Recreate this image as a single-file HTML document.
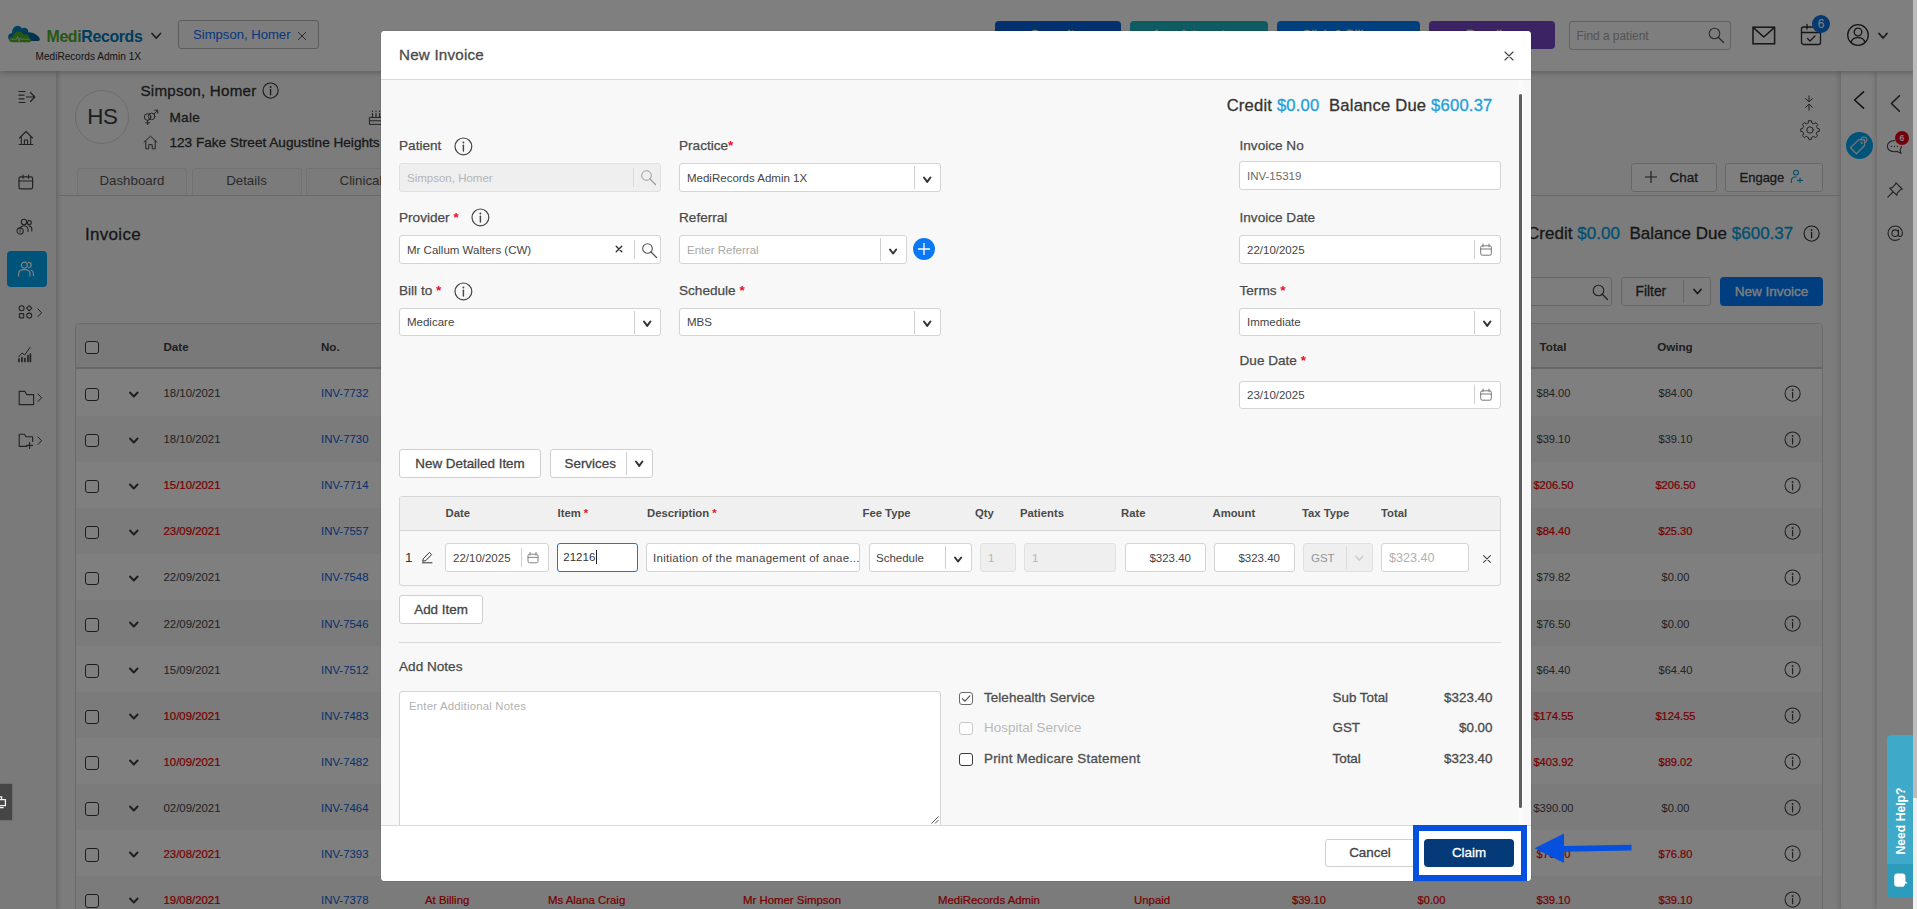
<!DOCTYPE html>
<html lang="en"><head><meta charset="utf-8"><title>New Invoice - MediRecords</title>
<style>
*{box-sizing:border-box;margin:0;padding:0}
html,body{width:1917px;height:909px;overflow:hidden;background:#f8f8f8}
body{font-family:"Liberation Sans",sans-serif;color:#333;position:relative;font-size:12px}
.a{position:absolute}
.t{position:absolute;white-space:nowrap;line-height:20px;height:20px}
.sb{-webkit-text-stroke:0.3px currentColor}
.b{font-weight:bold}
svg{position:absolute;overflow:visible}
.ic{fill:none;stroke:#333;stroke-width:1.3;stroke-linecap:round;stroke-linejoin:round}
#page{position:absolute;left:0;top:0;width:1917px;height:909px;background:#f7f7f7;overflow:hidden}
#hdr{left:0;top:0;width:1917px;height:71px;background:#fff;box-shadow:0 2px 5px rgba(0,0,0,.22)}
#side{left:0;top:71px;width:56px;height:838px;background:#f4f4f4;box-shadow:2px 0 5px rgba(0,0,0,.18)}
#content{left:58px;top:71px;width:1783px;height:838px;background:#f9f9f9}
.tab{position:absolute;top:168px;height:27px;border:1px solid #e4e4e4;border-bottom:none;border-radius:3px 3px 0 0;background:#f6f6f6;text-align:center;font-size:13.3px;line-height:24px;color:#555}
.btn{position:absolute;border:1px solid #cfcfcf;border-radius:3px;background:#fff;text-align:center;color:#444}
.inp{position:absolute;border:1px solid #d4d4d4;border-radius:3px;background:#fff;height:28px;font-size:11.5px;line-height:26px;color:#444;padding-left:7px;white-space:nowrap;overflow:hidden}
.inp.dis{background:#efefef;color:#b4b4b4;border-color:#e0e0e0}
.dv{position:absolute;width:1px;background:#d0d0d0}
.lbl{position:absolute;white-space:nowrap;font-size:13.6px;line-height:20px;color:#4a4a4a;-webkit-text-stroke:0.25px currentColor}
.req{color:#e8112d;font-weight:bold;-webkit-text-stroke:0}
.cb{position:absolute;width:14px;height:14px;border:1.3px solid #3a3a3a;border-radius:3px;background:#fff}
.row{position:absolute;left:76px;width:1746px;height:46px}
.row .t{font-size:11.4px}
.red{color:#ff0000}
.rr .t{-webkit-text-stroke:0.22px #f00000}
.rr .lnk{-webkit-text-stroke:0}
.mny{font-size:11.1px !important}
.lnk{color:#0d5fd8}
#overlay{position:absolute;left:0;top:0;width:1917px;height:909px;background:rgba(0,0,0,.5)}
#modal{position:absolute;left:381px;top:31px;width:1150px;height:849.5px;background:#f8f8f8;border-radius:4px;box-shadow:0 0 0 1px rgba(0,0,0,.06)}
#mh{position:absolute;left:0;top:0;width:1150px;height:49px;background:#fff;border-bottom:1px solid #d9d9d9;border-radius:4px 4px 0 0}
#mf{position:absolute;left:0;top:794px;width:1150px;height:55.5px;background:#fff;border-top:1px solid #d9d9d9;border-radius:0 0 4px 4px}
.th{position:absolute;top:0;font-size:11.5px;font-weight:bold;color:#4a4a4a;line-height:33px;white-space:nowrap}
</style></head>
<body>
<div id="page">
<div class="a" id="content"></div>
<div class="a" id="side"></div>
<div class="a" style="left:1841px;top:71px;width:36px;height:838px;background:#fff;box-shadow:-2px 0 5px rgba(0,0,0,.16)"></div>
<div class="a" style="left:1877px;top:71px;width:36px;height:838px;background:#fdfdfd;box-shadow:-2px 0 5px rgba(0,0,0,.16)"></div>
<div class="a" id="hdr"></div>
<svg style="left:7px;top:24px" width="35" height="20" viewBox="7 24 35 20">
<defs><linearGradient id="lg1" x1="0" y1="0" x2="1" y2="1"><stop offset="0" stop-color="#0090c8"/><stop offset="1" stop-color="#005a96"/></linearGradient></defs>
<path d="M11 40.8C8.6 40.4 7.8 38 8.3 36C8.8 34 10.4 33 12 33.2C12 29 14.4 25.8 17.6 25.7C19.6 25.7 21 26.8 21.8 28.4C23.2 27.4 25.4 27.4 26.8 28.6C28 29.6 28.4 31 28.2 32.4C30.4 32 33 32.8 35.4 34.2C38.2 35.8 40 38 39.8 39.6C39.7 40.6 39 41 38 41Z" fill="url(#lg1)"/>
<path d="M12.4 42.2C10.2 42.2 9 40.8 9.2 39.2C9.4 37.4 11 36.2 12.8 36.6C13.4 33.6 15.8 31.4 18.8 31.5C21.2 31.6 23 33 23.8 34.8C25.2 34 27.2 34.2 28.4 35.4C29.2 36.2 29.5 37.2 29.4 38.2C30.8 38.6 31.4 39.8 31.2 40.8C31 41.8 30.2 42.2 29.4 42.2Z" fill="#4fae2a"/>
<path d="M10.5 39.2H16.4L17.6 36.6L19 41.4L20.2 37.8L20.9 39.2H29.6" fill="none" stroke="#e8f4e0" stroke-width="0.7" stroke-linejoin="round"/>
</svg>
<span class="t b" style="left:46.5px;top:24.5px;font-size:15.9px;line-height:24px;height:24px;letter-spacing:-0.35px"><span style="color:#4fae2a">Medi</span><span style="color:#0079b8">Records</span></span>
<svg style="left:148.75px;top:31.2px" width="14.5" height="9.6" viewBox="-7.25 -4.8 14.5 9.6"><path d="M-4.25 -2.3L0 2.3L4.25 -2.3" fill="none" stroke="#444" stroke-width="1.7" stroke-linecap="round" stroke-linejoin="round"/></svg><span class="t " style="top:46.5px;font-size:10.1px;left:35.5px;color:#2a2a2a;">MediRecords Admin 1X</span><div class="a" style="left:178px;top:20px;width:141px;height:29px;border:1px solid #b9b9b9;border-radius:3px;background:#fafafa"></div>
<span class="t " style="top:25px;font-size:13.1px;left:193px;color:#0d6efd;">Simpson, Homer</span><svg style="left:296px;top:30px" width="12" height="12" viewBox="-6 -6 12 12"><path d="M-3.6 -3.6L3.6 3.6M3.6 -3.6L-3.6 3.6" stroke="#555" stroke-width="1" stroke-linecap="round"/></svg><div class="a" style="left:995px;top:21px;width:126px;height:28px;border-radius:4px;background:#0660dc"></div>
<div class="a" style="left:1130px;top:21px;width:138px;height:28px;border-radius:4px;background:#1cb8c2"></div>
<div class="a" style="left:1277px;top:21px;width:143px;height:28px;border-radius:4px;background:#0080ff"></div>
<div class="a" style="left:1429px;top:21px;width:126px;height:28px;border-radius:4px;background:#7846c8"></div>
<span class="t sb" style="top:25px;font-size:13px;left:1030px;color:#fff;">Consult</span><span class="t sb" style="top:25px;font-size:13px;left:1152px;color:#fff;">Appointment</span><span class="t sb" style="top:25px;font-size:13px;left:1302px;color:#fff;">Click &amp; Bill</span><span class="t sb" style="top:25px;font-size:13px;left:1466px;color:#fff;">Recall</span><div class="a" style="left:1569px;top:21px;width:162px;height:29px;border:1px solid #c4c4c4;border-radius:3px;background:#fcfcfc"></div>
<span class="t " style="top:26.3px;font-size:11.9px;left:1576.5px;color:#a9a9a9;">Find a patient</span><svg style="left:1706px;top:24.5px" width="20" height="20" viewBox="-10 -10 20 20"><circle cx="-1.5" cy="-1.5" r="5.3" fill="none" stroke="#555" stroke-width="1.1"/><path d="M2.32 2.32L7.5 7.5" stroke="#555" stroke-width="1.3" stroke-linecap="round"/></svg><svg style="left:1752px;top:26px" width="24" height="20" viewBox="0 0 24 20"><rect x="1" y="1.2" width="21.6" height="16.6" fill="none" stroke="#2b2b2b" stroke-width="1.5"/><path d="M1.4 1.6L11.8 11L22.2 1.6" fill="none" stroke="#2b2b2b" stroke-width="1.5" stroke-linejoin="round"/></svg>
<svg style="left:1800px;top:23px" width="23" height="23" viewBox="0 0 23 23" class="ic"><rect x="1.5" y="4" width="19" height="17.5" rx="2" stroke="#2b2b2b" stroke-width="1.3"/><path d="M1.5 9.5H20.5M7 1.5V6M15 1.5V6M7.5 15.5L10 18L15 13" stroke="#2b2b2b" stroke-width="1.3"/></svg>
<div class="a" style="left:1812px;top:15px;width:18px;height:18px;border-radius:9px;background:#0a73e0"></div>
<span class="t " style="top:14px;font-size:12px;left:1671px;width:300px;text-align:center;color:#fff;">6</span><svg style="left:1846px;top:23px" width="24" height="24" viewBox="-12 -12 24 24" class="ic"><circle r="10.3" stroke="#2b2b2b" stroke-width="1.3"/><circle cy="-3" r="3.8" stroke="#2b2b2b" stroke-width="1.3"/><path d="M-7 7.4C-6 3.6 -3 2.6 0 2.6S6 3.6 7 7.4" stroke="#2b2b2b" stroke-width="1.3"/></svg>
<svg style="left:1876.0px;top:31.25px" width="14" height="9.5" viewBox="-7.0 -4.75 14 9.5"><path d="M-4.0 -2.25L0 2.25L4.0 -2.25" fill="none" stroke="#333" stroke-width="1.8" stroke-linecap="round" stroke-linejoin="round"/></svg><svg style="left:18px;top:90px" width="18" height="14" viewBox="0 0 18 14" class="ic"><path d="M1 1.5H7M1 5.2H6M1 8.8H6M1 12.5H7M8.5 7H16.5M12.5 2.5L16.8 7L12.5 11.5" stroke="#444" stroke-width="1.2"/></svg>
<svg style="left:18px;top:130px" width="16" height="16" viewBox="0 0 16 16" class="ic"><path d="M1.5 8L8 1.5L14.5 8M3.3 6.6V14.5M12.7 6.6V14.5M1.2 14.5H14.8M6.4 14.5V10H9.6V14.5" stroke="#444" stroke-width="1.1"/></svg>
<svg style="left:18px;top:174px" width="16" height="16" viewBox="0 0 16 16" class="ic"><rect x="1" y="2.8" width="13.6" height="12" rx="1.6" stroke="#444" stroke-width="1.2"/><path d="M1 7H14.6M5 1V4.2M10.6 1V4.2" stroke="#444" stroke-width="1.2"/></svg>
<svg style="left:16px;top:218px" width="18" height="17" viewBox="0 0 18 17" class="ic"><circle cx="8" cy="4" r="2.7" stroke="#444" stroke-width="1.1"/><circle cx="13.3" cy="4.6" r="2" stroke="#444" stroke-width="1.1"/><path d="M4 10.5C4.6 8.6 6.2 7.8 8 7.8C10.2 7.8 11.7 9 12 11.2V13.5M13 8C14.8 8.1 15.8 9.2 15.8 11V13" stroke="#444" stroke-width="1.1"/><circle cx="4.2" cy="13" r="3.1" stroke="#444" stroke-width="1.1"/><path d="M4.2 11.8V14.2" stroke="#444" stroke-width="0.9"/></svg>
<div class="a" style="left:7px;top:251px;width:40px;height:36px;border-radius:4px;background:#00a8f4"></div>
<svg style="left:17px;top:261px" width="18" height="17" viewBox="0 0 18 17" class="ic"><circle cx="7.4" cy="4.2" r="3" stroke="#fff" stroke-width="1.2"/><path d="M1.6 15V12.6C1.6 9.8 4 8.6 7.4 8.6S13 9.8 13 12.6V15M11.4 1.4C13.2 1.4 14.2 2.6 14.2 4S13.3 6.4 11.8 6.6M14.4 9.2C15.8 9.8 16.4 10.8 16.4 12.4V14.6" stroke="#fff" stroke-width="1.2"/></svg>
<svg style="left:18px;top:305px" width="16" height="14" viewBox="0 0 16 14" class="ic"><circle cx="3.6" cy="3.2" r="2.5" stroke="#444" stroke-width="1.1"/><path d="M11.2 0.6L13.8 3.2L11.2 5.8L8.6 3.2Z" stroke="#444" stroke-width="1.1"/><rect x="1.4" y="8.6" width="4.3" height="4.3" rx="0.6" stroke="#444" stroke-width="1.1"/><circle cx="11.2" cy="10.6" r="2.5" stroke="#444" stroke-width="1.1"/></svg>
<svg style="left:36.2px;top:306.75px" width="7.6" height="11.5" viewBox="-3.8 -5.75 7.6 11.5"><path d="M-1.8 -3.75L1.8 0L-1.8 3.75" fill="none" stroke="#444" stroke-width="1" stroke-linecap="round" stroke-linejoin="round"/></svg><svg style="left:17px;top:346px" width="15" height="17" viewBox="0 0 15 17" class="ic"><path d="M1.6 11L5 7L7.6 9L13.2 1.2" stroke="#444" stroke-width="1"/><path d="M2 13V15.4M5 11.6V15.4M8 12.6V15.4M11 9.6V15.4M13.4 8V15.4" stroke="#444" stroke-width="1.7"/></svg>
<svg style="left:18px;top:390px" width="17" height="16" viewBox="0 0 17 16" class="ic"><path d="M1.2 14.6V1.4H7L8.6 4.6H15.6V14.6Z" stroke="#444" stroke-width="1.1"/></svg>
<svg style="left:36.2px;top:392.25px" width="7.6" height="11.5" viewBox="-3.8 -5.75 7.6 11.5"><path d="M-1.8 -3.75L1.8 0L-1.8 3.75" fill="none" stroke="#444" stroke-width="1" stroke-linecap="round" stroke-linejoin="round"/></svg><svg style="left:18px;top:433px" width="17" height="16" viewBox="0 0 17 16" class="ic"><path d="M9 13.4H1.2V1.2H6.4L8 3.8H14.6V8.4M11.6 9.4V15.4M8.6 12.4H14.6" stroke="#444" stroke-width="1.1"/></svg>
<svg style="left:36.2px;top:435.25px" width="7.6" height="11.5" viewBox="-3.8 -5.75 7.6 11.5"><path d="M-1.8 -3.75L1.8 0L-1.8 3.75" fill="none" stroke="#444" stroke-width="1" stroke-linecap="round" stroke-linejoin="round"/></svg><div class="a" style="left:75px;top:90px;width:54px;height:54px;border-radius:27px;border:1px solid #d8d8d8;background:#fafafa"></div>
<span class="t " style="top:107px;font-size:22.4px;left:-47.5px;width:300px;text-align:center;color:#3a3a3a;letter-spacing:-0.3px;">HS</span><span class="t sb" style="top:81px;font-size:15.2px;left:140.5px;color:#333;letter-spacing:0.2px;">Simpson, Homer</span><svg style="left:262.2px;top:82.4px" width="17.2" height="17.2" viewBox="-8.6 -8.6 17.2 17.2"><circle r="7.6" fill="none" stroke="#333" stroke-width="1.1"/><circle cy="-3.57" r="0.95" fill="#333"/><path d="M0 -1.14V4.18" stroke="#333" stroke-width="1.3" stroke-linecap="round"/></svg><svg style="left:143px;top:109px" width="16" height="17" viewBox="0 0 16 17" class="ic"><circle cx="4.6" cy="8" r="3.3" stroke="#444" stroke-width="1"/><circle cx="8.6" cy="7.4" r="3.3" stroke="#444" stroke-width="1"/><path d="M4.6 11.4V15.6M2.6 13.8H6.6M11 5L14.6 1.4M11.6 1.2H14.8V4.4" stroke="#444" stroke-width="1"/></svg>
<span class="t sb" style="top:107.7px;font-size:13.6px;left:169.5px;color:#333;letter-spacing:0.25px;">Male</span><svg style="left:368px;top:110px" width="16" height="15" viewBox="0 0 16 15" class="ic"><path d="M1.4 14V7.4H14.6V14ZM1.4 10.8H14.6M4.4 7.4V3.4M8 7.4V3.4M11.6 7.4V3.4M4.4 1V1.6M8 1V1.6M11.6 1V1.6" stroke="#444" stroke-width="1"/></svg>
<svg style="left:143px;top:135px" width="15" height="15" viewBox="0 0 15 15" class="ic"><path d="M1 7.2L7.5 1.2L14 7.2M2.8 6V13.8H5.8V9.6H9.2V13.8H12.2V6" stroke="#444" stroke-width="1"/></svg>
<span class="t sb" style="top:132.5px;font-size:13.6px;left:169.5px;color:#333;letter-spacing:0px;">123 Fake Street Augustine Heights</span><svg style="left:1802px;top:95px" width="14" height="16" viewBox="0 0 14 16" class="ic"><path d="M7 0.8V6.4M3.6 3.6L7 6.8L10.4 3.6M7 15.2V9.6M3.6 12.4L7 9.2L10.4 12.4" stroke="#444" stroke-width="1"/></svg>
<svg style="left:1799.6px;top:120.4px" width="20" height="20" viewBox="-10 -10 20 20" class="ic"><path d="M-1.3 -9.3H1.3L1.9 -7C2.6 -6.8 3.2 -6.5 3.8 -6.2L5.9 -7.3L7.7 -5.5L6.5 -3.5C6.8 -2.9 7.1 -2.3 7.2 -1.7L9.3 -1.1V1.3L7.1 1.9C6.9 2.6 6.6 3.2 6.3 3.8L7.5 5.8L5.7 7.6L3.7 6.4C3.1 6.8 2.5 7 1.8 7.2L1.3 9.3H-1.3L-1.8 7.2C-2.5 7 -3.1 6.8 -3.7 6.4L-5.7 7.6L-7.5 5.8L-6.3 3.8C-6.7 3.2 -6.9 2.6 -7.1 1.9L-9.3 1.3V-1.1L-7.2 -1.7C-7 -2.4 -6.8 -3 -6.4 -3.6L-7.6 -5.6L-5.8 -7.4L-3.8 -6.2C-3.2 -6.6 -2.6 -6.8 -1.9 -7Z" stroke="#444" stroke-width="1"/><circle r="3.2" stroke="#444" stroke-width="1"/></svg>
<div class="tab" style="left:77px;width:110px">Dashboard</div>
<div class="tab" style="left:191.5px;width:110px">Details</div>
<div class="tab" style="left:306px;width:110px">Clinical</div>
<div class="tab" style="left:420.5px;width:110px">Correspondence</div>
<div class="tab" style="left:535px;width:110px">Documents</div>
<div class="tab" style="left:649.5px;width:110px">Accounts</div>
<div class="a" style="left:58px;top:195px;width:1783px;height:1px;background:#d2d2d2"></div>
<div class="btn" style="left:1631px;top:163px;width:86px;height:29px"></div>
<svg style="left:1644px;top:170px" width="14" height="14" viewBox="0 0 14 14"><path d="M7 1V13M1 7H13" stroke="#333" stroke-width="1.1"/></svg>
<span class="t sb" style="top:167.8px;font-size:13.5px;left:1669.5px;color:#333;">Chat</span><div class="btn" style="left:1724.5px;top:163px;width:98.5px;height:29px"></div>
<span class="t sb" style="top:167.8px;font-size:13.0px;left:1739.5px;color:#333;">Engage</span><svg style="left:1790px;top:169px" width="14" height="15" viewBox="0 0 14 15" class="ic"><circle cx="6" cy="3.6" r="2.4" stroke="#00a0d8" stroke-width="1.1"/><path d="M1.4 13.6V12C1.4 9.4 3 8 5.4 8H6.4M10 9V13.6M7.6 11.4H12.4" stroke="#00a0d8" stroke-width="1.1"/></svg>
<span class="t sb" style="top:224.5px;font-size:17px;left:85px;color:#2f2f2f;letter-spacing:0.3px;">Invoice</span><span class="t sb" style="left:1501.3px;top:224.1px;font-size:17px;color:#2f2f2f;letter-spacing:0.02px;width:292px;text-align:right">Credit <span style="color:#00a0e3">$0.00</span>&nbsp; Balance Due <span style="color:#00a0e3">$600.37</span></span>
<svg style="left:1803.1px;top:225.4px" width="17.2" height="17.2" viewBox="-8.6 -8.6 17.2 17.2"><circle r="7.6" fill="none" stroke="#333" stroke-width="1.1"/><circle cy="-3.57" r="0.95" fill="#333"/><path d="M0 -1.14V4.18" stroke="#333" stroke-width="1.3" stroke-linecap="round"/></svg><div class="a" style="left:1400px;top:277px;width:212px;height:29px;border:1px solid #cdcdcd;border-radius:3px;background:#fbfbfb"></div>
<svg style="left:1590px;top:281.5px" width="20" height="20" viewBox="-10 -10 20 20"><circle cx="-1.5" cy="-1.5" r="5.3" fill="none" stroke="#444" stroke-width="1.1"/><path d="M2.32 2.32L7.5 7.5" stroke="#444" stroke-width="1.3" stroke-linecap="round"/></svg><div class="btn" style="left:1621px;top:277px;width:90px;height:29px;background:#fbfbfb"></div>
<span class="t sb" style="top:281.8px;font-size:13.8px;left:1635.5px;color:#333;">Filter</span><div class="dv" style="left:1683px;top:280px;height:23px"></div>
<svg style="left:1690.5px;top:287.0px" width="13" height="9" viewBox="-6.5 -4.5 13 9"><path d="M-3.5 -2.0L0 2.0L3.5 -2.0" fill="none" stroke="#333" stroke-width="1.8" stroke-linecap="round" stroke-linejoin="round"/></svg><div class="a" style="left:1720px;top:277px;width:103px;height:29px;border-radius:4px;background:#007dff"></div>
<span class="t sb" style="top:281.8px;font-size:13.5px;left:1621.5px;width:300px;text-align:center;color:#fff;">New Invoice</span><div class="a" style="left:75px;top:323px;width:1748px;height:600px;border:1px solid #d4d4d4;border-radius:4px;background:#fff"></div>
<div class="a" style="left:76px;top:324px;width:1746px;height:45px;background:#f3f3f3;border-bottom:2px solid #cfcfcf;border-radius:3px 3px 0 0"></div>
<div class="cb" style="left:85px;top:341px;height:13px"></div>
<span class="t b" style="top:337px;font-size:11.6px;left:163.5px;color:#3c3c3c;">Date</span><span class="t b" style="top:337px;font-size:11.6px;left:321px;color:#3c3c3c;">No.</span><span class="t b" style="top:337px;font-size:11.6px;left:425px;color:#3c3c3c;">Status</span><span class="t b" style="top:337px;font-size:11.6px;left:548px;color:#3c3c3c;">Provider</span><span class="t b" style="top:337px;font-size:11.6px;left:743px;color:#3c3c3c;">Patient</span><span class="t b" style="top:337px;font-size:11.6px;left:938px;color:#3c3c3c;">Practice</span><span class="t b" style="top:337px;font-size:11.6px;left:1134px;color:#3c3c3c;">Payment</span><span class="t b" style="top:337px;font-size:11.6px;left:1158.5px;width:300px;text-align:center;color:#3c3c3c;">Amount</span><span class="t b" style="top:337px;font-size:11.6px;left:1281px;width:300px;text-align:center;color:#3c3c3c;">Paid</span><span class="t b" style="top:337px;font-size:11.6px;left:1403px;width:300px;text-align:center;color:#3c3c3c;">Total</span><span class="t b" style="top:337px;font-size:11.6px;left:1525px;width:300px;text-align:center;color:#3c3c3c;">Owing</span><div class="row" style="top:370px;background:#fff"><div class="cb" style="left:9px;top:18px;height:13px"></div><span class="t" style="top:13.1px;left:87.5px;color:#444">18/10/2021</span><span class="t lnk" style="top:13.1px;left:245px">INV-7732</span><span class="t mny" style="top:13.1px;left:1427.5px;width:100px;text-align:center;color:#444">$84.00</span><span class="t mny" style="top:13.1px;left:1549.5px;width:100px;text-align:center;color:#444">$84.00</span></div>
<svg style="left:126.5px;top:389.9px" width="13.6" height="9" viewBox="-6.8 -4.5 13.6 9"><path d="M-3.8 -2.0L0 2.0L3.8 -2.0" fill="none" stroke="#3c3c3c" stroke-width="1.9" stroke-linecap="round" stroke-linejoin="round"/></svg><svg style="left:1784.4px;top:384.8px" width="17.2" height="17.2" viewBox="-8.6 -8.6 17.2 17.2"><circle r="7.6" fill="none" stroke="#444" stroke-width="1.05"/><circle cy="-3.57" r="0.95" fill="#444"/><path d="M0 -1.14V4.18" stroke="#444" stroke-width="1.25" stroke-linecap="round"/></svg><div class="row" style="top:416px;background:#f6f6f6"><div class="cb" style="left:9px;top:18px;height:13px"></div><span class="t" style="top:13.1px;left:87.5px;color:#444">18/10/2021</span><span class="t lnk" style="top:13.1px;left:245px">INV-7730</span><span class="t mny" style="top:13.1px;left:1427.5px;width:100px;text-align:center;color:#444">$39.10</span><span class="t mny" style="top:13.1px;left:1549.5px;width:100px;text-align:center;color:#444">$39.10</span></div>
<svg style="left:126.5px;top:435.9px" width="13.6" height="9" viewBox="-6.8 -4.5 13.6 9"><path d="M-3.8 -2.0L0 2.0L3.8 -2.0" fill="none" stroke="#3c3c3c" stroke-width="1.9" stroke-linecap="round" stroke-linejoin="round"/></svg><svg style="left:1784.4px;top:430.8px" width="17.2" height="17.2" viewBox="-8.6 -8.6 17.2 17.2"><circle r="7.6" fill="none" stroke="#444" stroke-width="1.05"/><circle cy="-3.57" r="0.95" fill="#444"/><path d="M0 -1.14V4.18" stroke="#444" stroke-width="1.25" stroke-linecap="round"/></svg><div class="row rr" style="top:462px;background:#fff"><div class="cb" style="left:9px;top:18px;height:13px"></div><span class="t" style="top:13.1px;left:87.5px;color:#f00000">15/10/2021</span><span class="t lnk" style="top:13.1px;left:245px">INV-7714</span><span class="t mny" style="top:13.1px;left:1427.5px;width:100px;text-align:center;color:#f00000">$206.50</span><span class="t mny" style="top:13.1px;left:1549.5px;width:100px;text-align:center;color:#f00000">$206.50</span></div>
<svg style="left:126.5px;top:481.9px" width="13.6" height="9" viewBox="-6.8 -4.5 13.6 9"><path d="M-3.8 -2.0L0 2.0L3.8 -2.0" fill="none" stroke="#3c3c3c" stroke-width="1.9" stroke-linecap="round" stroke-linejoin="round"/></svg><svg style="left:1784.4px;top:476.8px" width="17.2" height="17.2" viewBox="-8.6 -8.6 17.2 17.2"><circle r="7.6" fill="none" stroke="#444" stroke-width="1.05"/><circle cy="-3.57" r="0.95" fill="#444"/><path d="M0 -1.14V4.18" stroke="#444" stroke-width="1.25" stroke-linecap="round"/></svg><div class="row rr" style="top:508px;background:#f6f6f6"><div class="cb" style="left:9px;top:18px;height:13px"></div><span class="t" style="top:13.1px;left:87.5px;color:#f00000">23/09/2021</span><span class="t lnk" style="top:13.1px;left:245px">INV-7557</span><span class="t mny" style="top:13.1px;left:1427.5px;width:100px;text-align:center;color:#f00000">$84.40</span><span class="t mny" style="top:13.1px;left:1549.5px;width:100px;text-align:center;color:#f00000">$25.30</span></div>
<svg style="left:126.5px;top:527.9px" width="13.6" height="9" viewBox="-6.8 -4.5 13.6 9"><path d="M-3.8 -2.0L0 2.0L3.8 -2.0" fill="none" stroke="#3c3c3c" stroke-width="1.9" stroke-linecap="round" stroke-linejoin="round"/></svg><svg style="left:1784.4px;top:522.8px" width="17.2" height="17.2" viewBox="-8.6 -8.6 17.2 17.2"><circle r="7.6" fill="none" stroke="#444" stroke-width="1.05"/><circle cy="-3.57" r="0.95" fill="#444"/><path d="M0 -1.14V4.18" stroke="#444" stroke-width="1.25" stroke-linecap="round"/></svg><div class="row" style="top:554px;background:#fff"><div class="cb" style="left:9px;top:18px;height:13px"></div><span class="t" style="top:13.1px;left:87.5px;color:#444">22/09/2021</span><span class="t lnk" style="top:13.1px;left:245px">INV-7548</span><span class="t mny" style="top:13.1px;left:1427.5px;width:100px;text-align:center;color:#444">$79.82</span><span class="t mny" style="top:13.1px;left:1549.5px;width:100px;text-align:center;color:#444">$0.00</span></div>
<svg style="left:126.5px;top:573.9px" width="13.6" height="9" viewBox="-6.8 -4.5 13.6 9"><path d="M-3.8 -2.0L0 2.0L3.8 -2.0" fill="none" stroke="#3c3c3c" stroke-width="1.9" stroke-linecap="round" stroke-linejoin="round"/></svg><svg style="left:1784.4px;top:568.8px" width="17.2" height="17.2" viewBox="-8.6 -8.6 17.2 17.2"><circle r="7.6" fill="none" stroke="#444" stroke-width="1.05"/><circle cy="-3.57" r="0.95" fill="#444"/><path d="M0 -1.14V4.18" stroke="#444" stroke-width="1.25" stroke-linecap="round"/></svg><div class="row" style="top:600px;background:#f6f6f6"><div class="cb" style="left:9px;top:18px;height:14px"></div><span class="t" style="top:14px;left:87.5px;color:#444">22/09/2021</span><span class="t lnk" style="top:14px;left:245px">INV-7546</span><span class="t mny" style="top:14px;left:1427.5px;width:100px;text-align:center;color:#444">$76.50</span><span class="t mny" style="top:14px;left:1549.5px;width:100px;text-align:center;color:#444">$0.00</span></div>
<svg style="left:126.5px;top:619.9px" width="13.6" height="9" viewBox="-6.8 -4.5 13.6 9"><path d="M-3.8 -2.0L0 2.0L3.8 -2.0" fill="none" stroke="#3c3c3c" stroke-width="1.9" stroke-linecap="round" stroke-linejoin="round"/></svg><svg style="left:1784.4px;top:614.8px" width="17.2" height="17.2" viewBox="-8.6 -8.6 17.2 17.2"><circle r="7.6" fill="none" stroke="#444" stroke-width="1.05"/><circle cy="-3.57" r="0.95" fill="#444"/><path d="M0 -1.14V4.18" stroke="#444" stroke-width="1.25" stroke-linecap="round"/></svg><div class="row" style="top:646px;background:#fff"><div class="cb" style="left:9px;top:18px;height:14px"></div><span class="t" style="top:14px;left:87.5px;color:#444">15/09/2021</span><span class="t lnk" style="top:14px;left:245px">INV-7512</span><span class="t mny" style="top:14px;left:1427.5px;width:100px;text-align:center;color:#444">$64.40</span><span class="t mny" style="top:14px;left:1549.5px;width:100px;text-align:center;color:#444">$64.40</span></div>
<svg style="left:126.5px;top:665.9px" width="13.6" height="9" viewBox="-6.8 -4.5 13.6 9"><path d="M-3.8 -2.0L0 2.0L3.8 -2.0" fill="none" stroke="#3c3c3c" stroke-width="1.9" stroke-linecap="round" stroke-linejoin="round"/></svg><svg style="left:1784.4px;top:660.8px" width="17.2" height="17.2" viewBox="-8.6 -8.6 17.2 17.2"><circle r="7.6" fill="none" stroke="#444" stroke-width="1.05"/><circle cy="-3.57" r="0.95" fill="#444"/><path d="M0 -1.14V4.18" stroke="#444" stroke-width="1.25" stroke-linecap="round"/></svg><div class="row rr" style="top:692px;background:#f6f6f6"><div class="cb" style="left:9px;top:18px;height:14px"></div><span class="t" style="top:14px;left:87.5px;color:#f00000">10/09/2021</span><span class="t lnk" style="top:14px;left:245px">INV-7483</span><span class="t mny" style="top:14px;left:1427.5px;width:100px;text-align:center;color:#f00000">$174.55</span><span class="t mny" style="top:14px;left:1549.5px;width:100px;text-align:center;color:#f00000">$124.55</span></div>
<svg style="left:126.5px;top:711.9px" width="13.6" height="9" viewBox="-6.8 -4.5 13.6 9"><path d="M-3.8 -2.0L0 2.0L3.8 -2.0" fill="none" stroke="#3c3c3c" stroke-width="1.9" stroke-linecap="round" stroke-linejoin="round"/></svg><svg style="left:1784.4px;top:706.8px" width="17.2" height="17.2" viewBox="-8.6 -8.6 17.2 17.2"><circle r="7.6" fill="none" stroke="#444" stroke-width="1.05"/><circle cy="-3.57" r="0.95" fill="#444"/><path d="M0 -1.14V4.18" stroke="#444" stroke-width="1.25" stroke-linecap="round"/></svg><div class="row rr" style="top:738px;background:#fff"><div class="cb" style="left:9px;top:18px;height:14px"></div><span class="t" style="top:14px;left:87.5px;color:#f00000">10/09/2021</span><span class="t lnk" style="top:14px;left:245px">INV-7482</span><span class="t mny" style="top:14px;left:1427.5px;width:100px;text-align:center;color:#f00000">$403.92</span><span class="t mny" style="top:14px;left:1549.5px;width:100px;text-align:center;color:#f00000">$89.02</span></div>
<svg style="left:126.5px;top:757.9px" width="13.6" height="9" viewBox="-6.8 -4.5 13.6 9"><path d="M-3.8 -2.0L0 2.0L3.8 -2.0" fill="none" stroke="#3c3c3c" stroke-width="1.9" stroke-linecap="round" stroke-linejoin="round"/></svg><svg style="left:1784.4px;top:752.8px" width="17.2" height="17.2" viewBox="-8.6 -8.6 17.2 17.2"><circle r="7.6" fill="none" stroke="#444" stroke-width="1.05"/><circle cy="-3.57" r="0.95" fill="#444"/><path d="M0 -1.14V4.18" stroke="#444" stroke-width="1.25" stroke-linecap="round"/></svg><div class="row" style="top:784px;background:#f6f6f6"><div class="cb" style="left:9px;top:18px;height:14px"></div><span class="t" style="top:14px;left:87.5px;color:#444">02/09/2021</span><span class="t lnk" style="top:14px;left:245px">INV-7464</span><span class="t mny" style="top:14px;left:1427.5px;width:100px;text-align:center;color:#444">$390.00</span><span class="t mny" style="top:14px;left:1549.5px;width:100px;text-align:center;color:#444">$0.00</span></div>
<svg style="left:126.5px;top:803.9px" width="13.6" height="9" viewBox="-6.8 -4.5 13.6 9"><path d="M-3.8 -2.0L0 2.0L3.8 -2.0" fill="none" stroke="#3c3c3c" stroke-width="1.9" stroke-linecap="round" stroke-linejoin="round"/></svg><svg style="left:1784.4px;top:798.8px" width="17.2" height="17.2" viewBox="-8.6 -8.6 17.2 17.2"><circle r="7.6" fill="none" stroke="#444" stroke-width="1.05"/><circle cy="-3.57" r="0.95" fill="#444"/><path d="M0 -1.14V4.18" stroke="#444" stroke-width="1.25" stroke-linecap="round"/></svg><div class="row rr" style="top:830px;background:#fff"><div class="cb" style="left:9px;top:18px;height:14px"></div><span class="t" style="top:14px;left:87.5px;color:#f00000">23/08/2021</span><span class="t lnk" style="top:14px;left:245px">INV-7393</span><span class="t mny" style="top:14px;left:1427.5px;width:100px;text-align:center;color:#f00000">$76.80</span><span class="t mny" style="top:14px;left:1549.5px;width:100px;text-align:center;color:#f00000">$76.80</span></div>
<svg style="left:126.5px;top:849.9px" width="13.6" height="9" viewBox="-6.8 -4.5 13.6 9"><path d="M-3.8 -2.0L0 2.0L3.8 -2.0" fill="none" stroke="#3c3c3c" stroke-width="1.9" stroke-linecap="round" stroke-linejoin="round"/></svg><svg style="left:1784.4px;top:844.8px" width="17.2" height="17.2" viewBox="-8.6 -8.6 17.2 17.2"><circle r="7.6" fill="none" stroke="#444" stroke-width="1.05"/><circle cy="-3.57" r="0.95" fill="#444"/><path d="M0 -1.14V4.18" stroke="#444" stroke-width="1.25" stroke-linecap="round"/></svg><div class="row rr" style="top:876px;background:#f6f6f6"><div class="cb" style="left:9px;top:18px;height:14px"></div><span class="t" style="top:14px;left:87.5px;color:#f00000">19/08/2021</span><span class="t lnk" style="top:14px;left:245px">INV-7378</span><span class="t" style="top:14px;left:349px;color:#f00000">At Billing</span><span class="t" style="top:14px;left:472px;color:#f00000">Ms Alana Craig</span><span class="t" style="top:14px;left:667px;color:#f00000">Mr Homer Simpson</span><span class="t" style="top:14px;left:862px;color:#f00000">MediRecords Admin</span><span class="t" style="top:14px;left:1058px;color:#f00000">Unpaid</span><span class="t mny" style="top:14px;left:1183px;width:100px;text-align:center;color:#f00000">$39.10</span><span class="t mny" style="top:14px;left:1305.5px;width:100px;text-align:center;color:#f00000">$0.00</span><span class="t mny" style="top:14px;left:1427.5px;width:100px;text-align:center;color:#f00000">$39.10</span><span class="t mny" style="top:14px;left:1549.5px;width:100px;text-align:center;color:#f00000">$39.10</span></div>
<svg style="left:126.5px;top:895.9px" width="13.6" height="9" viewBox="-6.8 -4.5 13.6 9"><path d="M-3.8 -2.0L0 2.0L3.8 -2.0" fill="none" stroke="#3c3c3c" stroke-width="1.9" stroke-linecap="round" stroke-linejoin="round"/></svg><svg style="left:1784.4px;top:890.8px" width="17.2" height="17.2" viewBox="-8.6 -8.6 17.2 17.2"><circle r="7.6" fill="none" stroke="#444" stroke-width="1.05"/><circle cy="-3.57" r="0.95" fill="#444"/><path d="M0 -1.14V4.18" stroke="#444" stroke-width="1.25" stroke-linecap="round"/></svg><svg style="left:1852px;top:90px" width="14" height="20" viewBox="0 0 14 20" class="ic"><path d="M11.5 1.8L2.6 10L11.5 18.2" stroke="#2b2b2b" stroke-width="1.6"/></svg>
<svg style="left:1889px;top:94px" width="13" height="19" viewBox="0 0 13 19" class="ic"><path d="M10.4 1.8L2.4 9.5L10.4 17.2" stroke="#2b2b2b" stroke-width="1.5"/></svg>
<div class="a" style="left:1846px;top:132px;width:27px;height:27px;border-radius:14px;background:#00a8f4"></div>
<svg style="left:1848px;top:133.6px" width="24" height="24" viewBox="0 0 20 20" class="ic"><path d="M2 11.4L9 4.8H13.8V9.6L7 16.4Z" stroke="#e8e8e8" stroke-width="1.1"/><circle cx="11.4" cy="7.4" r="0.9" fill="#e8e8e8" stroke="none"/><path d="M11 4.2C11.6 2.6 13.4 2 14.8 3C16.2 4 16 5.8 14.6 7" stroke="#e8e8e8" stroke-width="1"/></svg>
<svg style="left:1886px;top:139px" width="18" height="17" viewBox="0 0 18 17" class="ic"><path d="M8.4 1.6C4.4 1.6 1.4 4 1.4 7.2S4.4 12.8 8.4 12.8C9.4 12.8 10.4 12.6 11.2 12.4L15 14.2L14 10.8C15 9.8 15.4 8.6 15.4 7.2" stroke="#444" stroke-width="1.1"/><path d="M5.4 7.4H5.5M8.4 7.4H8.5M11.4 7.4H11.5" stroke="#444" stroke-width="1.3"/></svg>
<div class="a" style="left:1895px;top:131px;width:14px;height:14px;border-radius:7px;background:#e8001c"></div>
<span class="t b" style="top:128px;font-size:8.6px;left:1752px;width:300px;text-align:center;color:#fff;">6</span><svg style="left:1886px;top:181px" width="18" height="18" viewBox="0 0 18 18" class="ic"><path d="M10 1.8L16.2 8L14.6 8.6L11.4 11.8L10.8 14.4L3.6 7.2L6.2 6.6L9.4 3.4ZM7 11L1.8 16.2" stroke="#444" stroke-width="1.1"/></svg>
<svg style="left:1886px;top:224px" width="18.4" height="18.4" viewBox="-9 -9 18 18" class="ic"><circle r="3.2" stroke="#444" stroke-width="1.1"/><path d="M3.2 -3V1.6C3.2 4 7 4 7 0C7 -4 4 -7 0 -7S-7 -4 -7 0S-4 7 0 7C1.6 7 3 6.6 4.2 5.8" stroke="#444" stroke-width="1.1"/></svg>
</div>
<div id="overlay"></div>
<div class="a" style="left:1913px;top:0;width:4px;height:909px;background:#f1f1f1"></div>
<div class="a" style="left:1913px;top:0;width:4px;height:798px;background:#bcbcbc"></div>
<div class="a" style="left:0;top:784px;width:12px;height:36px;background:#464646;box-shadow:0 0 2px rgba(0,0,0,.3)"></div>
<svg style="left:0;top:795px" width="8" height="16" viewBox="0 0 8 16"><path d="M0 1.8H1.6V4.6M0 4.6H5.4V10.6H0M0 12.6H3.6" fill="none" stroke="#f2f2f2" stroke-width="1.3"/></svg>
<div class="a" style="left:1887px;top:734.5px;width:26px;height:162px;background:#3fa9c9;border-radius:4px 0 0 4px"></div>
<div class="a" style="left:1887px;top:864px;width:26px;height:32.5px;background:#2d9bbc;border-radius:0 0 0 4px"></div>
<span class="t b" style="left:1851px;top:810.5px;width:100px;text-align:center;font-size:12.2px;color:#fff;transform:rotate(-90deg);transform-origin:50% 50%">Need Help?</span>
<svg style="left:1893px;top:872px" width="16" height="16" viewBox="0 0 16 16"><path d="M1.2 4.4C1.2 2.6 2.4 1.4 4.2 1.4H9.4C11.2 1.4 12.4 2.6 12.4 4.4V9.2L14.6 11.4H12.2C11.8 13.6 10.8 14.8 9.4 14.8H4.2C2.4 14.8 1.2 13.6 1.2 11.8Z" fill="#fff"/></svg>
<div id="modal">
<div id="mh"></div>
<span class="t sb" style="top:13.5px;font-size:15.2px;left:18px;color:#4a4a4a;letter-spacing:0.2px;">New Invoice</span><svg style="left:1121.5px;top:18.5px" width="12" height="12" viewBox="-6 -6 12 12"><path d="M-4 -4L4 4M4 -4L-4 4" stroke="#444" stroke-width="1.1" stroke-linecap="round"/></svg><span class="t sb" style="left:769px;top:64.9px;width:342.5px;text-align:right;font-size:16.6px;color:#333;letter-spacing:0.2px">Credit <span style="color:#1c9fe0">$0.00</span>&nbsp; Balance Due <span style="color:#1c9fe0">$600.37</span></span>
<span class="lbl" style="left:18px;top:105.1px">Patient</span>
<svg style="left:72.6px;top:105.6px" width="18.8" height="18.8" viewBox="-9.4 -9.4 18.8 18.8"><circle r="8.4" fill="none" stroke="#444" stroke-width="1.2"/><circle cy="-3.95" r="0.95" fill="#444"/><path d="M0 -1.26V4.62" stroke="#444" stroke-width="1.4" stroke-linecap="round"/></svg><div class="inp dis" style="left:18px;top:132px;width:262px;height:29px;line-height:28px;">Simpson, Homer</div>
<div class="dv" style="left:252px;top:137px;height:19px;background:#dcdcdc"></div>
<svg style="left:256.5px;top:135.5px" width="20" height="20" viewBox="-10 -10 20 20"><circle cx="-1.5" cy="-1.5" r="4.8" fill="none" stroke="#9a9a9a" stroke-width="1"/><path d="M1.96 1.96L7.5 7.5" stroke="#9a9a9a" stroke-width="1.2" stroke-linecap="round"/></svg><span class="lbl" style="left:18px;top:177.1px">Provider<span class="req">&nbsp;*</span></span>
<svg style="left:89.6px;top:177.1px" width="18.8" height="18.8" viewBox="-9.4 -9.4 18.8 18.8"><circle r="8.4" fill="none" stroke="#444" stroke-width="1.2"/><circle cy="-3.95" r="0.95" fill="#444"/><path d="M0 -1.26V4.62" stroke="#444" stroke-width="1.4" stroke-linecap="round"/></svg><div class="inp " style="left:18px;top:204px;width:262px;height:29px;line-height:28px;">Mr Callum Walters (CW)</div>
<svg style="left:232.0px;top:212.0px" width="12" height="12" viewBox="-6 -6 12 12"><path d="M-2.8 -2.8L2.8 2.8M2.8 -2.8L-2.8 2.8" stroke="#333" stroke-width="1.4" stroke-linecap="round"/></svg><div class="dv" style="left:253px;top:209px;height:19px;background:#cfcfcf"></div>
<svg style="left:257.5px;top:208.5px" width="20" height="20" viewBox="-10 -10 20 20"><circle cx="-1.5" cy="-1.5" r="4.8" fill="none" stroke="#555" stroke-width="1.1"/><path d="M1.96 1.96L7.5 7.5" stroke="#555" stroke-width="1.3" stroke-linecap="round"/></svg><span class="lbl" style="left:18px;top:250.1px">Bill to<span class="req">&nbsp;*</span></span>
<svg style="left:72.6px;top:250.6px" width="18.8" height="18.8" viewBox="-9.4 -9.4 18.8 18.8"><circle r="8.4" fill="none" stroke="#444" stroke-width="1.2"/><circle cy="-3.95" r="0.95" fill="#444"/><path d="M0 -1.26V4.62" stroke="#444" stroke-width="1.4" stroke-linecap="round"/></svg><div class="inp " style="left:18px;top:277px;width:262px;height:28px;line-height:26px;">Medicare</div>
<div class="dv" style="left:253px;top:280px;height:23px;background:#cfcfcf"></div>
<svg style="left:259.8px;top:287.8px" width="12.4" height="9.4" viewBox="-6.2 -4.7 12.4 9.4"><path d="M-3.2 -2.2L0 2.2L3.2 -2.2" fill="none" stroke="#333" stroke-width="2" stroke-linecap="round" stroke-linejoin="round"/></svg><span class="lbl" style="left:298px;top:105.1px">Practice<span class="req">*</span></span>
<div class="inp " style="left:298px;top:132px;width:262px;height:29px;line-height:28px;">MediRecords Admin 1X</div>
<div class="dv" style="left:533px;top:135px;height:23px;background:#cfcfcf"></div>
<svg style="left:539.8px;top:143.8px" width="12.4" height="9.4" viewBox="-6.2 -4.7 12.4 9.4"><path d="M-3.2 -2.2L0 2.2L3.2 -2.2" fill="none" stroke="#333" stroke-width="2" stroke-linecap="round" stroke-linejoin="round"/></svg><span class="lbl" style="left:298px;top:177.1px">Referral</span>
<div class="inp " style="left:298px;top:204px;width:228px;height:29px;line-height:28px;"><span style="color:#a8a8a8">Enter Referral</span></div>
<div class="dv" style="left:499px;top:207px;height:23px;background:#cfcfcf"></div>
<svg style="left:505.9px;top:216.0px" width="12.2" height="9" viewBox="-6.1 -4.5 12.2 9"><path d="M-3.1 -2.0L0 2.0L3.1 -2.0" fill="none" stroke="#333" stroke-width="2" stroke-linecap="round" stroke-linejoin="round"/></svg><div class="a" style="left:532px;top:207px;width:22px;height:22px;border-radius:11px;background:#0a78f5"></div>
<svg style="left:536px;top:211px" width="14" height="14" viewBox="0 0 14 14"><path d="M7 1V13M1 7H13" stroke="#fff" stroke-width="1.3"/></svg>
<span class="lbl" style="left:298px;top:250.1px">Schedule<span class="req">&nbsp;*</span></span>
<div class="inp " style="left:298px;top:277px;width:262px;height:28px;line-height:26px;">MBS</div>
<div class="dv" style="left:533px;top:280px;height:23px;background:#cfcfcf"></div>
<svg style="left:539.8px;top:287.8px" width="12.4" height="9.4" viewBox="-6.2 -4.7 12.4 9.4"><path d="M-3.2 -2.2L0 2.2L3.2 -2.2" fill="none" stroke="#333" stroke-width="2" stroke-linecap="round" stroke-linejoin="round"/></svg><span class="lbl" style="left:858.5px;top:105.1px">Invoice No</span>
<div class="inp " style="left:858px;top:130px;width:262px;height:29px;line-height:28px;color:#6a6a6a;">INV-15319</div>
<span class="lbl" style="left:858.5px;top:177.1px">Invoice Date</span>
<div class="inp " style="left:858px;top:204px;width:262px;height:29px;line-height:28px;">22/10/2025</div>
<div class="dv" style="left:1092.5px;top:209px;height:19px;background:#cfcfcf"></div>
<svg style="left:1096.5px;top:210.5px" width="16" height="16" viewBox="-8 -8 16 16"><rect x="-5.3" y="-4.2" width="10.6" height="9.4" rx="1.5" fill="none" stroke="#777" stroke-width="1"/><path d="M-5.3 -1.0H5.3M-3 -6.0V-3.2M3 -6.0V-3.2" stroke="#777" stroke-width="1" stroke-linecap="round" fill="none"/></svg><span class="lbl" style="left:858.5px;top:250.1px">Terms<span class="req">&nbsp;*</span></span>
<div class="inp " style="left:858px;top:277px;width:262px;height:28px;line-height:26px;">Immediate</div>
<div class="dv" style="left:1093px;top:280px;height:23px;background:#cfcfcf"></div>
<svg style="left:1099.8px;top:287.8px" width="12.4" height="9.4" viewBox="-6.2 -4.7 12.4 9.4"><path d="M-3.2 -2.2L0 2.2L3.2 -2.2" fill="none" stroke="#333" stroke-width="2" stroke-linecap="round" stroke-linejoin="round"/></svg><span class="lbl" style="left:858.5px;top:320.1px">Due Date<span class="req">&nbsp;*</span></span>
<div class="inp " style="left:858px;top:350px;width:262px;height:28px;line-height:26px;">23/10/2025</div>
<div class="dv" style="left:1092.5px;top:354px;height:19px;background:#cfcfcf"></div>
<svg style="left:1096.5px;top:355.5px" width="16" height="16" viewBox="-8 -8 16 16"><rect x="-5.3" y="-4.2" width="10.6" height="9.4" rx="1.5" fill="none" stroke="#777" stroke-width="1"/><path d="M-5.3 -1.0H5.3M-3 -6.0V-3.2M3 -6.0V-3.2" stroke="#777" stroke-width="1" stroke-linecap="round" fill="none"/></svg><div class="btn sb" style="left:18px;top:418px;width:142px;height:29px;font-size:13.4px;line-height:28px;color:#444">New Detailed Item</div>
<div class="btn" style="left:169px;top:418px;width:103px;height:29px"></div>
<span class="t sb" style="top:423px;font-size:13.4px;left:183.5px;color:#444;">Services</span><div class="dv" style="left:244.5px;top:421px;height:23px;background:#cfcfcf"></div>
<svg style="left:251.8px;top:428.3px" width="12.4" height="9.4" viewBox="-6.2 -4.7 12.4 9.4"><path d="M-3.2 -2.2L0 2.2L3.2 -2.2" fill="none" stroke="#333" stroke-width="2" stroke-linecap="round" stroke-linejoin="round"/></svg><div class="a" style="left:18px;top:465px;width:1102px;height:90px;border:1px solid #d6d6d6;border-radius:3px;background:#f8f8f8;overflow:hidden"><div class="a" style="left:0;top:0;width:1101px;height:34px;background:#f0f0f0;border-bottom:1px solid #d6d6d6"></div></div>
<span class="t b" style="top:472px;font-size:11.3px;left:64.5px;color:#4a4a4a;">Date</span><span class="t b" style="top:472px;font-size:11.3px;left:176.5px;color:#4a4a4a;">Item<span class="req">&nbsp;*</span></span><span class="t b" style="top:472px;font-size:11.3px;left:266px;color:#4a4a4a;">Description<span class="req">&nbsp;*</span></span><span class="t b" style="top:472px;font-size:11.3px;left:481.5px;color:#4a4a4a;">Fee Type</span><span class="t b" style="top:472px;font-size:11.3px;left:594px;color:#4a4a4a;">Qty</span><span class="t b" style="top:472px;font-size:11.3px;left:639px;color:#4a4a4a;">Patients</span><span class="t b" style="top:472px;font-size:11.3px;left:740px;color:#4a4a4a;">Rate</span><span class="t b" style="top:472px;font-size:11.3px;left:831.5px;color:#4a4a4a;">Amount</span><span class="t b" style="top:472px;font-size:11.3px;left:921px;color:#4a4a4a;">Tax Type</span><span class="t b" style="top:472px;font-size:11.3px;left:1000px;color:#4a4a4a;">Total</span><span class="t " style="top:516.5px;font-size:13.4px;left:24px;color:#333;">1</span><svg style="left:40px;top:519px" width="13" height="14" viewBox="0 0 13 14" class="ic"><path d="M2.6 8.4L8.4 2.4L10.6 4.6L4.8 10.6L2 11.2ZM1.4 12.8H11" stroke="#333" stroke-width="1"/></svg>
<div class="inp " style="left:64px;top:512px;width:104px;height:29px;line-height:28px;">22/10/2025</div>
<div class="dv" style="left:140px;top:517px;height:19px;background:#cfcfcf"></div>
<svg style="left:143.5px;top:518.5px" width="16" height="16" viewBox="-8 -8 16 16"><rect x="-5.0" y="-3.8" width="10" height="8.6" rx="1.5" fill="none" stroke="#777" stroke-width="0.9"/><path d="M-5.0 -0.6H5.0M-3 -5.6V-2.8M3 -5.6V-2.8" stroke="#777" stroke-width="0.9" stroke-linecap="round" fill="none"/></svg><div class="inp " style="left:176px;top:512px;width:81px;height:28px;line-height:26px;border:1.7px solid #1a73e8;height:29px;line-height:26px;padding-left:5.3px;color:#333;">21216</div>
<div class="a" style="left:214.5px;top:519px;width:1px;height:14px;background:#222"></div>
<div class="inp " style="left:265px;top:512px;width:214px;height:29px;line-height:28px;padding-left:6px;letter-spacing:0.27px;">Initiation of the management of anae...</div>
<div class="inp " style="left:488px;top:512px;width:103px;height:29px;line-height:28px;padding-left:6px;">Schedule</div>
<div class="dv" style="left:563.5px;top:515px;height:23px;background:#cfcfcf"></div>
<svg style="left:570.9px;top:523.5px" width="12.2" height="9" viewBox="-6.1 -4.5 12.2 9"><path d="M-3.1 -2.0L0 2.0L3.1 -2.0" fill="none" stroke="#333" stroke-width="2" stroke-linecap="round" stroke-linejoin="round"/></svg><div class="inp dis" style="left:599px;top:512px;width:36px;height:29px;line-height:28px;">1</div>
<div class="inp dis" style="left:643px;top:512px;width:92px;height:29px;line-height:28px;">1</div>
<div class="inp " style="left:744px;top:512px;width:81px;height:29px;line-height:28px;text-align:right;padding-right:14px;padding-left:0;">$323.40</div>
<div class="inp " style="left:833px;top:512px;width:81px;height:29px;line-height:28px;text-align:right;padding-right:14px;padding-left:0;">$323.40</div>
<div class="inp dis" style="left:922px;top:512px;width:70px;height:29px;line-height:28px;color:#949494;">GST</div>
<div class="dv" style="left:964.5px;top:515px;height:23px;background:#dcdcdc"></div>
<svg style="left:971.75px;top:523.2px" width="12.5" height="8.6" viewBox="-6.25 -4.3 12.5 8.6"><path d="M-3.25 -1.8L0 1.8L3.25 -1.8" fill="none" stroke="#cfcfcf" stroke-width="1.8" stroke-linecap="round" stroke-linejoin="round"/></svg><div class="inp " style="left:1000px;top:512px;width:88px;height:29px;line-height:28px;padding-left:7px;color:#b0b0b0;font-size:12.6px;">$323.40</div>
<svg style="left:1100.0px;top:521.8px" width="12" height="12" viewBox="-6 -6 12 12"><path d="M-3.4 -3.4L3.4 3.4M3.4 -3.4L-3.4 3.4" stroke="#444" stroke-width="1.1" stroke-linecap="round"/></svg><div class="btn sb" style="left:18px;top:564px;width:84px;height:29px;font-size:13.4px;line-height:28px;color:#444">Add Item</div>
<div class="a" style="left:18px;top:611px;width:1102px;height:1px;background:#d9d9d9"></div>
<span class="lbl" style="left:18px;top:626.1px">Add Notes</span>
<div class="a" style="left:18px;top:660px;width:542px;height:140px;border:1px solid #d4d4d4;border-radius:3px;background:#fff"></div>
<span class="t " style="top:664.5px;font-size:11.4px;left:28px;color:#b2b2b2;letter-spacing:0.2px;">Enter Additional Notes</span><svg style="left:550px;top:785px" width="8" height="8" viewBox="0 0 8 8"><path d="M7.5 0.5L0.5 7.5M7.5 4L4 7.5" stroke="#444" stroke-width="0.9"/></svg>
<div class="cb" style="left:578px;top:660.5px;height:13px;border-color:#6a6a6a;border-width:1.2px"></div>
<svg style="left:578px;top:660.5px" width="14" height="14" viewBox="0 0 14 14"><path d="M3.4 6.8L6 9.2L10.8 3.8" fill="none" stroke="#555" stroke-width="1.2" stroke-linecap="round" stroke-linejoin="round"/></svg>
<span class="t sb" style="top:656.7px;font-size:13.4px;left:603px;color:#4f4f4f;letter-spacing:0.08px;">Telehealth Service</span><div class="cb" style="left:578px;top:690.5px;height:13px;border-color:#c8c8c8;border-width:1.2px"></div>
<span class="t " style="top:686.7px;font-size:13.4px;left:603px;color:#b8b8b8;letter-spacing:0.05px;">Hospital Service</span><div class="cb" style="left:578px;top:721.5px;height:13px;border-color:#3a3a3a"></div>
<span class="t sb" style="top:717.7px;font-size:13.4px;left:603px;color:#4f4f4f;letter-spacing:0.22px;">Print Medicare Statement</span><span class="t sb" style="top:656.7px;font-size:13.4px;left:951.5px;color:#4a4a4a;">Sub Total</span><span class="t sb" style="left:1011.5px;width:100px;text-align:right;top:656.7px;font-size:13.4px;color:#4a4a4a">$323.40</span>
<span class="t sb" style="top:686.7px;font-size:13.4px;left:951.5px;color:#4a4a4a;">GST</span><span class="t sb" style="left:1011.5px;width:100px;text-align:right;top:686.7px;font-size:13.4px;color:#4a4a4a">$0.00</span>
<span class="t sb" style="top:717.7px;font-size:13.4px;left:951.5px;color:#4a4a4a;">Total</span><span class="t sb" style="left:1011.5px;width:100px;text-align:right;top:717.7px;font-size:13.4px;color:#4a4a4a">$323.40</span>
<div class="a" style="left:1138px;top:49px;width:4px;height:745px;background:#fcfcfc"></div>
<div class="a" style="left:1138px;top:63px;width:3px;height:714px;background:#5e5e5e;border-radius:2px"></div>
<div id="mf"></div>
<div class="btn sb" style="left:944px;top:808px;width:90px;height:28px;font-size:13.4px;line-height:26px;color:#444">Cancel</div>
<div class="a sb" style="left:1043px;top:808px;width:90px;height:28px;border-radius:4px;background:#053a78;color:#fff;font-size:13.4px;line-height:27px;text-align:center">Claim</div>
</div>
<div class="a" style="left:1413px;top:825px;width:114px;height:55.5px;border:6px solid #0650e0"></div>
<svg style="left:1530px;top:828px" width="110" height="40" viewBox="1530 828 110 40"><path d="M1534.5 848.3L1564 833.6V846L1631.5 844.7V850.6L1564 851.8V863Z" fill="#0650e0"/></svg>
</body></html>
